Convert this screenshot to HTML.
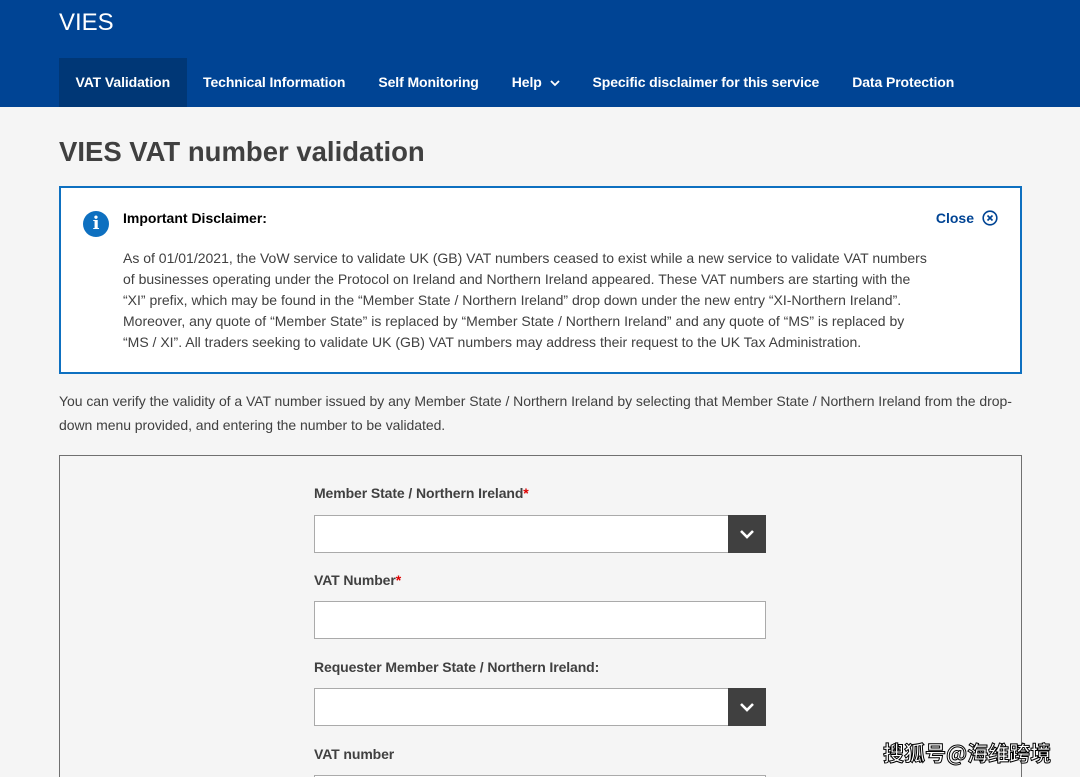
<!DOCTYPE html>
<html><head><meta charset="utf-8"><style>
*{box-sizing:border-box;margin:0;padding:0}
html,body{width:1080px;height:777px;overflow:hidden}
body{background:#f5f5f5;font-family:"Liberation Sans",Arial,sans-serif;color:#404040;position:relative}
.hdr{position:absolute;left:0;top:0;width:1080px;height:107px;background:#004494}
.logo{position:absolute;left:59px;top:9px;color:#fff;font-size:24px}
.nav{position:absolute;left:59px;top:58px;height:49px;display:flex}
.nav div{color:#fff;font-weight:bold;font-size:14px;letter-spacing:-0.1px;line-height:49px;padding:0 16.5px;white-space:nowrap}
.nav .act{background:#003776}
h1{position:absolute;left:59px;top:136px;font-size:27.5px;font-weight:bold;color:#404040}
.disc{position:absolute;left:59px;top:186px;width:963px;height:188px;border:2px solid #0e70c0;background:#fff}
.ic{position:absolute;left:22px;top:23px;width:26px;height:26px;border-radius:50%;background:#0e70c0;color:#fff;font-weight:bold;font-family:"DejaVu Serif",serif;font-size:18px;text-align:center;line-height:26px}
.dt{position:absolute;left:62px;top:22px;font-weight:bold;font-size:14px;color:#000}
.close{position:absolute;right:22px;top:22px;color:#004494;font-weight:bold;font-size:14px;display:flex;align-items:center;gap:8px}
.dp{position:absolute;left:62px;top:60px;width:805px;font-size:14px;line-height:21px;color:#404040}
.intro{position:absolute;left:59px;top:389px;width:963px;font-size:14px;letter-spacing:-0.05px;line-height:24px}
.form{position:absolute;left:59px;top:455px;width:963px;height:340px;border:1px solid #707070;background:#f5f5f5}
.lab{position:absolute;left:314px;font-weight:bold;font-size:14px;letter-spacing:-0.1px;color:#404040}
.lab span{color:#d00}
.inp{position:absolute;left:314px;width:452px;height:38px;background:#fff;border:1px solid #aaa}
.sel .b{position:absolute;right:-1px;top:-1px;width:38px;height:38px;background:#404040}
.wm{position:absolute;left:883px;top:738px;font-family:"Noto Sans CJK SC",sans-serif;font-weight:bold;font-size:21px;color:#fff;-webkit-text-stroke:1px #000}
</style></head><body>
<div class="hdr"><div class="logo">VIES</div>
<div class="nav"><div class="act">VAT Validation</div><div>Technical Information</div><div>Self Monitoring</div><div>Help <svg width="10" height="7" viewBox="0 0 10 7" style="margin-left:4px"><path d="M1 1l4 4 4-4" stroke="#fff" stroke-width="1.8" fill="none"/></svg></div><div>Specific disclaimer for this service</div><div>Data Protection</div></div></div>
<h1>VIES VAT number validation</h1>
<div class="disc"><div class="ic">i</div><div class="dt">Important Disclaimer:</div>
<div class="close">Close <svg width="16" height="16" viewBox="0 0 16 16"><circle cx="8" cy="8" r="6.8" stroke="#004494" stroke-width="1.6" fill="none"/><path d="M5.5 5.5l5 5M10.5 5.5l-5 5" stroke="#004494" stroke-width="1.6"/></svg></div>
<div class="dp">As of 01/01/2021, the VoW service to validate UK (GB) VAT numbers ceased to exist while a new service to validate VAT numbers of businesses operating under the Protocol on Ireland and Northern Ireland appeared. These VAT numbers are starting with the “XI” prefix, which may be found in the “Member State / Northern Ireland” drop down under the new entry “XI-Northern Ireland”. Moreover, any quote of “Member State” is replaced by “Member State / Northern Ireland” and any quote of “MS” is replaced by “MS / XI”. All traders seeking to validate UK (GB) VAT numbers may address their request to the UK Tax Administration.</div></div>
<div class="intro">You can verify the validity of a VAT number issued by any Member State / Northern Ireland by selecting that Member State / Northern Ireland from the drop-down menu provided, and entering the number to be validated.</div>
<div class="form"></div>
<div class="lab" style="top:485px">Member State / Northern Ireland<span>*</span></div>
<div class="inp sel" style="top:515px"><div class="b"><svg width="38" height="38" viewBox="0 0 38 38"><path d="M13 16l6 6 6-6" stroke="#fff" stroke-width="2.6" fill="none"/></svg></div></div>
<div class="lab" style="top:572px">VAT Number<span>*</span></div>
<div class="inp" style="top:601px"></div>
<div class="lab" style="top:659px">Requester Member State / Northern Ireland:</div>
<div class="inp sel" style="top:688px"><div class="b"><svg width="38" height="38" viewBox="0 0 38 38"><path d="M13 16l6 6 6-6" stroke="#fff" stroke-width="2.6" fill="none"/></svg></div></div>
<div class="lab" style="top:746px">VAT number</div>
<div class="inp" style="top:775px"></div>
<div class="wm">搜狐号@海维跨境</div>
</body></html>
